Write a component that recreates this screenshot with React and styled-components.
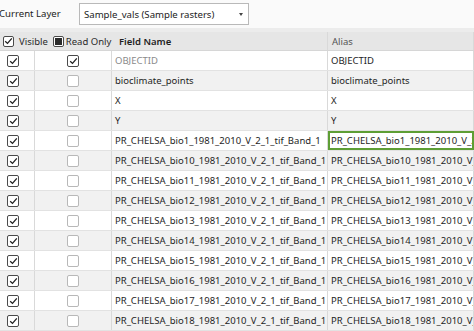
import React from "react";
import styled, { createGlobalStyle } from "styled-components";

const Global = createGlobalStyle`
  html, body { margin: 0; padding: 0; background: #ffffff; overflow: hidden; }
  body { font-family: "Noto Sans", "Open Sans", sans-serif; color: #1e1e1e; }
`;

const Page = styled.div`
  width: 474px;
  height: 331px;
  overflow: hidden;
  display: flex;
  flex-direction: column;
  background: #fafafa;
`;

const Toolbar = styled.div`
  height: 31px;
  display: flex;
  align-items: flex-start;
  padding-top: 3px;
  box-sizing: border-box;
  background: #fafafa;
`;

const Label = styled.span`
  font-size: 9.6px;
  line-height: 22px;
  width: 80px;
  margin-left: -1px;
  color: #222;
`;

const Select = styled.div`
  width: 170px;
  height: 22px;
  box-sizing: border-box;
  border: 1px solid #b9b9b9;
  background: #fff;
  display: flex;
  align-items: center;
  justify-content: space-between;
  padding: 0 5px 0 4px;
  font-size: 9.6px;
  color: #222;
`;

const Caret = styled.span`
  width: 0;
  height: 0;
  border-left: 2.5px solid transparent;
  border-right: 2.5px solid transparent;
  border-top: 3px solid #444;
`;

const Band = styled.div`
  height: 5px;
  background: #ececec;
`;

const Grid = styled.div`
  flex: 1;
  display: flex;
  flex-direction: column;
  background: #fff;
`;

const Row = styled.div`
  display: grid;
  grid-template-columns: 35px 77px 216px 1fr;
  height: 20px;
  box-sizing: border-box;
  border-bottom: 1px solid #e2e2e2;
  background: ${(p) => (p.$alt ? "#f1f1f1" : "#ffffff")};
  flex-shrink: 0;
`;

const HeaderRow = styled.div`
  display: grid;
  grid-template-columns: 112px 216px 1fr;
  height: 19px;
  box-sizing: border-box;
  border-bottom: 1px solid #d6d6d6;
  background: #e6e6e6;
  flex-shrink: 0;
`;

const HeadGroup = styled.div`
  display: flex;
  align-items: center;
  padding-left: 3px;
  font-size: 9.5px;
  white-space: nowrap;
  color: #2a2a2a;
`;

const HeadItem = styled.span`
  display: inline-flex;
  align-items: center;
  gap: ${(p) => p.$gap || 5}px;
  margin-right: ${(p) => p.$mr || 0}px;
`;

const Cell = styled.div`
  display: flex;
  align-items: center;
  justify-content: ${(p) => p.$justify || "flex-start"};
  padding-left: ${(p) => p.$pl || 0}px;
  border-right: 1px solid #d9d9d9;
  font-size: 9.5px;
  white-space: nowrap;
  overflow: hidden;
  box-sizing: border-box;
  color: ${(p) => (p.$dim ? "#8a8a8a" : p.$muted ? "#555" : "#1e1e1e")};
  font-weight: ${(p) => (p.$bold ? 600 : 400)};
  ${(p) =>
    p.$selected &&
    `
    outline: 2px solid #5e9e35;
    outline-offset: -2px;
  `}
`;

const Box = styled.span`
  width: ${(p) => p.$size || 12}px;
  height: ${(p) => p.$size || 12}px;
  box-sizing: border-box;
  border-radius: 2px;
  border: 1px solid ${(p) => (p.$on ? "#4a4a4a" : "#b8b8b8")};
  background: #fff;
  display: inline-flex;
  align-items: center;
  justify-content: center;
  flex-shrink: 0;
`;

const Square = styled.span`
  width: 7px;
  height: 7px;
  background: #2b2b2b;
`;

const Check = ({ on, size = 12 }) => (
  <Box $on={on} $size={size}>
    {on && (
      <svg width="9" height="8" viewBox="0 0 9 8">
        <path d="M1.2 4.2 L3.5 6.4 L7.8 1.4" fill="none" stroke="#1f1f1f" strokeWidth="1.3" />
      </svg>
    )}
  </Box>
);

const fields = [
  { name: "OBJECTID", alias: "OBJECTID", ro: true, dim: true },
  { name: "bioclimate_points", alias: "bioclimate_points" },
  { name: "X", alias: "X" },
  { name: "Y", alias: "Y" },
  ...["1", "10", "11", "12", "13", "14", "15", "16", "17", "18"].map((n) => ({
    name: `PR_CHELSA_bio${n}_1981_2010_V_2_1_tif_Band_1`,
    alias: `PR_CHELSA_bio${n}_1981_2010_V_2_1_tif_Band_1`,
    sel: n === "1",
  })),
];

export default function App() {
  return (
    <>
      <Global />
      <Page>
        <Toolbar>
          <Label>Current Layer</Label>
          <Select>
            <span>Sample_vals (Sample rasters)</span>
            <Caret />
          </Select>
        </Toolbar>
        <Band />
        <Grid>
          <HeaderRow>
            <HeadGroup>
              <HeadItem $gap={5} $mr={5}>
                <Check on size={11} />
                Visible
              </HeadItem>
              <HeadItem $gap={2}>
                <Box $on $size={11}>
                  <Square />
                </Box>
                Read Only
              </HeadItem>
            </HeadGroup>
            <Cell $pl={7} $bold>
              Field Name
            </Cell>
            <Cell $pl={4} $muted>
              Alias
            </Cell>
          </HeaderRow>
          {fields.map((f, i) => (
            <Row key={f.name} $alt={i % 2 === 1}>
              <Cell $pl={7}>
                <Check on />
              </Cell>
              <Cell $justify="center">
                <Check on={!!f.ro} />
              </Cell>
              <Cell $pl={3} $dim={f.dim}>
                {f.name}
              </Cell>
              <Cell $pl={3} $selected={f.sel}>
                {f.alias}
              </Cell>
            </Row>
          ))}
        </Grid>
      </Page>
    </>
  );
}
